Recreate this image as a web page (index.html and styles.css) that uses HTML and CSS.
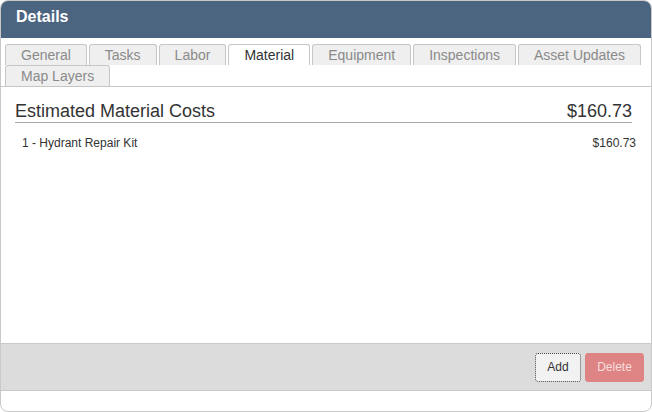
FILE: index.html
```html
<!DOCTYPE html>
<html>
<head>
<meta charset="utf-8">
<link rel="stylesheet" href="styles.css">
</head>
<body>
<div class="panel">
  <div class="header">Details</div>
  <div class="main">
    <div class="tabs">
      <div class="tab">General</div>
      <div class="tab">Tasks</div>
      <div class="tab">Labor</div>
      <div class="tab active">Material</div>
      <div class="tab">Equipment</div>
      <div class="tab">Inspections</div>
      <div class="tab">Asset Updates</div>
      <div class="tab">Map Layers</div>
    </div>
    <div class="content">
      <div class="title-row">
        <span>Estimated Material Costs</span>
        <span>$160.73</span>
      </div>
      <div class="item-row">
        <span>1 - Hydrant Repair Kit</span>
        <span>$160.73</span>
      </div>
    </div>
  </div>
  <div class="footer">
    <button class="btn btn-add">Add</button>
    <button class="btn btn-delete">Delete</button>
  </div>
  <div class="bottom"></div>
</div>
</body>
</html>
```
FILE: styles.css
```css
html, body {
  margin: 0;
  padding: 0;
  background: #ffffff;
}
body {
  font-family: "Liberation Sans", Arial, sans-serif;
}
.panel {
  width: 652px;
  height: 412px;
  box-sizing: border-box;
  border: 1px solid #c9c9c9;
  border-radius: 8px;
  overflow: hidden;
  display: flex;
  flex-direction: column;
  background: #fff;
}
.header {
  height: 38px;
  margin: -1px -1px 0 -1px;
  background: #4b6480;
  color: #fff;
  font-weight: bold;
  font-size: 16px;
  line-height: 34px;
  padding-left: 16px;
  flex: none;
}
.main {
  flex: 1;
  display: flex;
  flex-direction: column;
}
.tabs {
  display: flex;
  flex-wrap: wrap;
  padding: 6px 0 0 4px;
  border-bottom: 1px solid #c6c6c6;
}
.tab {
  box-sizing: border-box;
  height: 21px;
  margin-right: 2px;
  padding: 0 15px;
  border: 1px solid #c6c6c6;
  border-bottom: none;
  border-radius: 3px 3px 0 0;
  background: #efefef;
  color: #8a8a8a;
  font-size: 14px;
  line-height: 21px;
}
.tab.active {
  background: #fff;
  color: #333;
}
.content {
  padding: 13px 19px 0 14px;
}
.title-row {
  display: flex;
  justify-content: space-between;
  font-size: 18px;
  line-height: 22px;
  color: #333;
  border-bottom: 1px solid #aaaaaa;
}
.item-row {
  display: flex;
  justify-content: space-between;
  margin-top: 13px;
  padding: 0 0 0 7px;
  margin-right: -4px;
  font-size: 12px;
  line-height: 15px;
  color: #333;
}
.footer {
  flex: none;
  height: 48px;
  box-sizing: border-box;
  background: #dcdcdc;
  border-top: 1px solid #c9c9c9;
  border-bottom: 1px solid #c9c9c9;
  display: flex;
  justify-content: flex-end;
  align-items: center;
  gap: 4px;
  padding-right: 7px;
}
.btn {
  box-sizing: border-box;
  height: 29px;
  font-family: "Liberation Sans", Arial, sans-serif;
  font-size: 12px;
  padding: 0;
  border-radius: 3px;
  cursor: pointer;
}
.btn-add {
  width: 46px;
  background: #f2f2f2;
  border: 1px dotted #444;
  color: #333;
}
.btn-delete {
  width: 59px;
  background: #df8484;
  border: 1px solid #df8484;
  color: #f6dede;
}
.bottom {
  flex: none;
  height: 20px;
}
```
